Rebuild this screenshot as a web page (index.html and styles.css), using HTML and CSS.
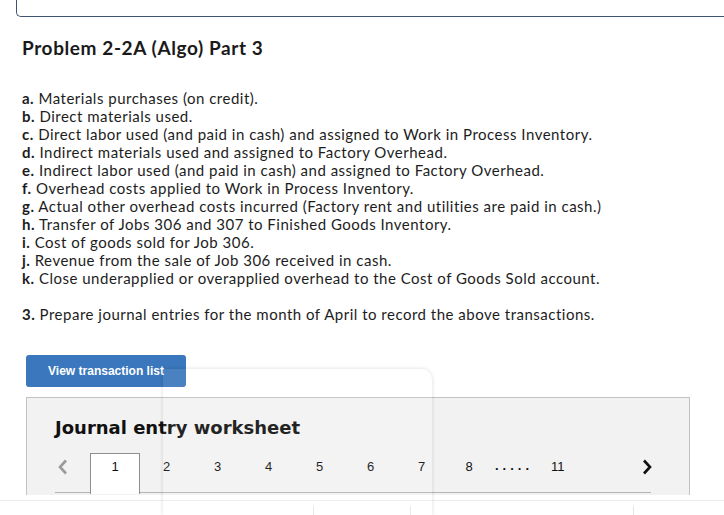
FILE: index.html
```html
<!DOCTYPE html>
<html>
<head>
<meta charset="utf-8">
<link rel="stylesheet" href="styles.css">
</head>
<body>
<div class="topbox"></div>
<div class="content">
  <h1 class="title">Problem 2-2A (Algo) Part 3</h1>
  <ol class="items">
    <li><b>a.</b> Materials purchases (on credit).</li>
    <li><b>b.</b> Direct materials used.</li>
    <li><b>c.</b> Direct labor used (and paid in cash) and assigned to Work in Process Inventory.</li>
    <li><b>d.</b> Indirect materials used and assigned to Factory Overhead.</li>
    <li><b>e.</b> Indirect labor used (and paid in cash) and assigned to Factory Overhead.</li>
    <li><b>f.</b> Overhead costs applied to Work in Process Inventory.</li>
    <li><b>g.</b> Actual other overhead costs incurred (Factory rent and utilities are paid in cash.)</li>
    <li><b>h.</b> Transfer of Jobs 306 and 307 to Finished Goods Inventory.</li>
    <li><b>i.</b> Cost of goods sold for Job 306.</li>
    <li><b>j.</b> Revenue from the sale of Job 306 received in cash.</li>
    <li><b>k.</b> Close underapplied or overapplied overhead to the Cost of Goods Sold account.</li>
  </ol>
  <p class="task"><b>3.</b> Prepare journal entries for the month of April to record the above transactions.</p>
</div>
<button class="btn">View transaction list</button>
<div class="panel">
  <h2 class="ws-title">Journal entry worksheet</h2>
  <div class="tabs">
    <span class="arrow prev"><svg width="12" height="16" viewBox="0 0 12 16"><polyline points="9,1.5 3,8 9,14.5" fill="none" stroke="#9a9a9a" stroke-width="2.6"/></svg></span>
    <span class="tab active">1</span>
    <span class="tab">2</span>
    <span class="tab">3</span>
    <span class="tab">4</span>
    <span class="tab">5</span>
    <span class="tab">6</span>
    <span class="tab">7</span>
    <span class="tab t8">8</span>
    <span class="dots">.....</span>
    <span class="tab t11">11</span>
    <span class="arrow next"><svg width="12" height="16" viewBox="0 0 12 16"><polyline points="3,1.5 9,8 3,14.5" fill="none" stroke="#111" stroke-width="2.6"/></svg></span>
  </div>
</div>
<div class="tablehead">
  <div class="col c1"></div>
  <div class="col c2"></div>
  <div class="col c4"></div>
  <div class="col c5"></div>
</div>
<div class="overlay"></div>
</body>
</html>
```
FILE: styles.css
```css
html, body {
  margin: 0;
  padding: 0;
  overflow: hidden;
  background: #fff;
  height: 515px;
}
body {
  position: relative;
  font-family: Lato, "Noto Sans", sans-serif;
  color: #1d1d1d;
}
.topbox {
  margin-left: 16px;
  height: 16px;
  border-left: 1.5px solid #3e5470;
  border-bottom: 1.5px solid #3e5470;
  border-bottom-left-radius: 5px;
}
.content {
  padding-left: 22px;
}
.title {
  margin: 20px 0 0;
  font-size: 19px;
  line-height: 22px;
  font-weight: 700;
  letter-spacing: 0.6px;
  color: #1a1a1a;
}
.items {
  list-style: none;
  margin: 30px 0 0;
  padding: 0;
  font-size: 15px;
  line-height: 18px;
  letter-spacing: 0.5px;
}
.items b, .task b { font-weight: 700; }
.task {
  margin: 18px 0 0;
  font-size: 15px;
  line-height: 18px;
  letter-spacing: 0.5px;
}
.btn {
  display: block;
  margin: 32px 0 0 26px;
  width: 160px;
  height: 32px;
  border: none;
  border-radius: 3px;
  background: #3a77bc;
  color: #fff;
  font-family: "Liberation Sans", Arial, sans-serif;
  font-weight: 700;
  font-size: 12px;
  padding: 0;
}
.panel {
  margin: 10px 0 0 26px;
  width: 662px;
  height: 97px;
  background: #f2f2f2;
  border: 1px solid #c2c2c2;
  border-bottom: none;
  overflow: hidden;
}
.ws-title {
  margin: 19px 0 0 28px;
  font-family: "DejaVu Sans", Verdana, sans-serif;
  font-weight: 700;
  font-size: 18px;
  line-height: 22px;
  color: #111;
}
.tabs {
  display: flex;
  align-items: flex-start;
  margin: 14px 0 0 28px;
  width: 596px;
  height: 40px;
  border-bottom: 1px solid #b5b5b5;
  box-sizing: border-box;
  font-family: "Liberation Sans", Arial, sans-serif;
  font-size: 13px;
  color: #111;
}
.arrow {
  display: flex;
  align-items: center;
  height: 28px;
}
.prev { width: 35px; padding-left: 2px; box-sizing: border-box; }
.tab {
  width: 51px;
  height: 40px;
  line-height: 16px;
  padding-top: 6px;
  box-sizing: border-box;
  text-align: center;
}
.tab.active {
  width: 50px;
  height: 41px;
  margin-right: 1px;
  background: #fff;
  border: 1px solid #8e8e8e;
  border-bottom: none;
  padding-top: 5px;
}
.tab.t8 { width: 44px; }
.dots {
  width: 46px;
  padding-top: 5px;
  line-height: 16px;
  font-weight: 700;
  letter-spacing: 4px;
  padding-left: 4px;
  box-sizing: border-box;
}
.tab.t11 { width: 40px; text-align: left; padding-left: 14px; }
.next { margin-left: auto; width: 16px; margin-right: -6px; }
.tablehead {
  display: flex;
  margin-top: 5px;
  border-top: 1px solid #ececec;
  height: 40px;
}
.col {
  height: 40px;
  margin-top: 5px;
  box-sizing: border-box;
}
.c1 { width: 313px; }
.c2 { width: 97px; border-left: 1px solid #e6e6e6; }
.c4 { width: 223px; border-left: 1px solid #e6e6e6; }
.c5 { flex: 1; border-left: 1px solid #e6e6e6; }
.overlay {
  position: absolute;
  left: 163px;
  top: 369px;
  width: 269px;
  height: 146px;
  background: rgba(255, 255, 255, 0.08);
  border-top-right-radius: 10px;
  box-shadow: 0 0 4px rgba(0, 0, 0, 0.14);
  pointer-events: none;
}
```
